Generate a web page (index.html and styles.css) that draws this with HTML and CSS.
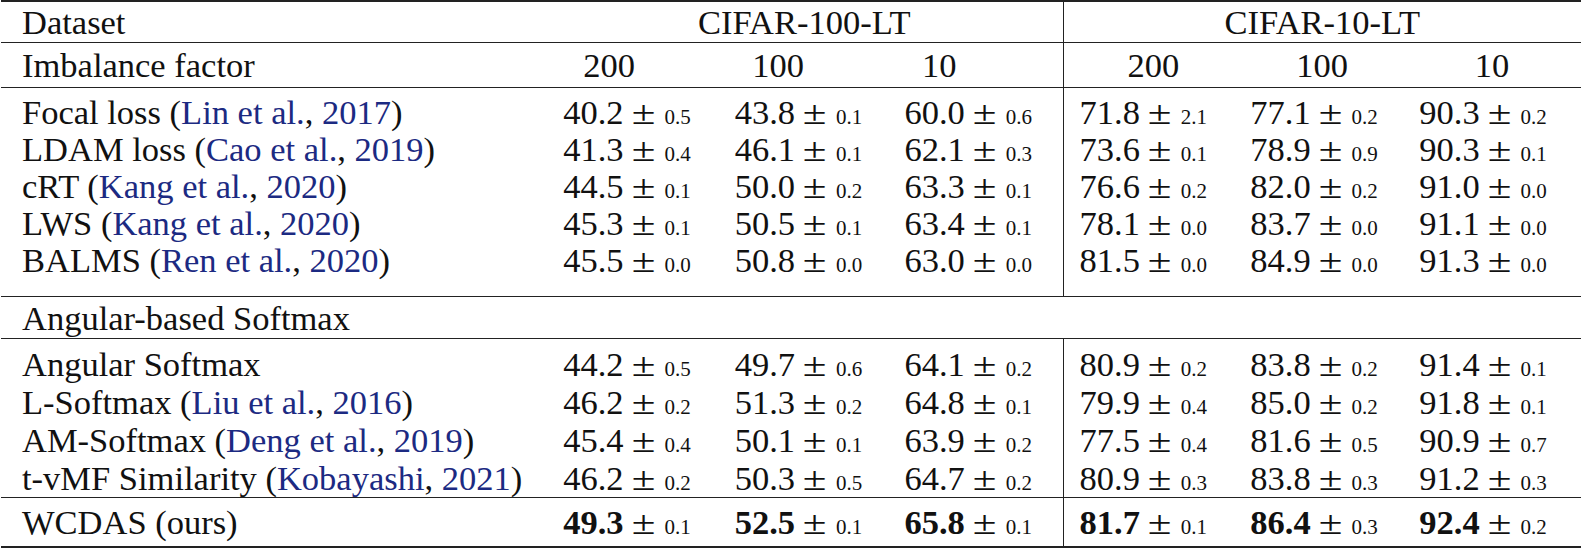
FILE: index.html
```html
<!DOCTYPE html>
<html lang="en">
<head>
  <meta charset="UTF-8" />
  <title>Long-tailed classification results</title>
  <link rel="stylesheet" href="styles.css">
</head>
<body>

<table class="results">
  <colgroup>
    <col class="c-label">
    <col class="c-a"><col class="c-b"><col class="c-c">
    <col class="c-a"><col class="c-b"><col class="c-d">
  </colgroup>
  <thead>
    <tr class="head-top">
      <th class="label">Dataset</th>
      <th colspan="3" class="split">CIFAR-100-LT</th>
      <th colspan="3">CIFAR-10-LT</th>
    </tr>
    <tr class="head-sub">
      <th class="label">Imbalance factor</th>
      <th class="h1">200</th><th class="h2">100</th><th class="h3 split">10</th>
      <th class="h4">200</th><th class="h5">100</th><th class="h6">10</th>
    </tr>
  </thead>

  <tbody class="group-a">
    <tr>
      <td class="label">Focal loss (<span class="cite">Lin et al.</span>, <span class="cite">2017</span>)</td>
      <td class="v1">40.2<span class="pm">±</span><small>0.5</small></td><td class="v2">43.8<span class="pm">±</span><small>0.1</small></td><td class="v3 split">60.0<span class="pm">±</span><small>0.6</small></td>
      <td class="v4">71.8<span class="pm">±</span><small>2.1</small></td><td class="v5">77.1<span class="pm">±</span><small>0.2</small></td><td class="v6">90.3<span class="pm">±</span><small>0.2</small></td>
    </tr>
    <tr>
      <td class="label">LDAM loss (<span class="cite">Cao et al.</span>, <span class="cite">2019</span>)</td>
      <td class="v1">41.3<span class="pm">±</span><small>0.4</small></td><td class="v2">46.1<span class="pm">±</span><small>0.1</small></td><td class="v3 split">62.1<span class="pm">±</span><small>0.3</small></td>
      <td class="v4">73.6<span class="pm">±</span><small>0.1</small></td><td class="v5">78.9<span class="pm">±</span><small>0.9</small></td><td class="v6">90.3<span class="pm">±</span><small>0.1</small></td>
    </tr>
    <tr>
      <td class="label">cRT (<span class="cite">Kang et al.</span>, <span class="cite">2020</span>)</td>
      <td class="v1">44.5<span class="pm">±</span><small>0.1</small></td><td class="v2">50.0<span class="pm">±</span><small>0.2</small></td><td class="v3 split">63.3<span class="pm">±</span><small>0.1</small></td>
      <td class="v4">76.6<span class="pm">±</span><small>0.2</small></td><td class="v5">82.0<span class="pm">±</span><small>0.2</small></td><td class="v6">91.0<span class="pm">±</span><small>0.0</small></td>
    </tr>
    <tr>
      <td class="label">LWS (<span class="cite">Kang et al.</span>, <span class="cite">2020</span>)</td>
      <td class="v1">45.3<span class="pm">±</span><small>0.1</small></td><td class="v2">50.5<span class="pm">±</span><small>0.1</small></td><td class="v3 split">63.4<span class="pm">±</span><small>0.1</small></td>
      <td class="v4">78.1<span class="pm">±</span><small>0.0</small></td><td class="v5">83.7<span class="pm">±</span><small>0.0</small></td><td class="v6">91.1<span class="pm">±</span><small>0.0</small></td>
    </tr>
    <tr>
      <td class="label">BALMS (<span class="cite">Ren et al.</span>, <span class="cite">2020</span>)</td>
      <td class="v1">45.5<span class="pm">±</span><small>0.0</small></td><td class="v2">50.8<span class="pm">±</span><small>0.0</small></td><td class="v3 split">63.0<span class="pm">±</span><small>0.0</small></td>
      <td class="v4">81.5<span class="pm">±</span><small>0.0</small></td><td class="v5">84.9<span class="pm">±</span><small>0.0</small></td><td class="v6">91.3<span class="pm">±</span><small>0.0</small></td>
    </tr>
  </tbody>

  <tbody class="section">
    <tr><td colspan="7" class="label">Angular-based Softmax</td></tr>
  </tbody>

  <tbody class="group-b">
    <tr>
      <td class="label">Angular Softmax</td>
      <td class="v1">44.2<span class="pm">±</span><small>0.5</small></td><td class="v2">49.7<span class="pm">±</span><small>0.6</small></td><td class="v3 split">64.1<span class="pm">±</span><small>0.2</small></td>
      <td class="v4">80.9<span class="pm">±</span><small>0.2</small></td><td class="v5">83.8<span class="pm">±</span><small>0.2</small></td><td class="v6">91.4<span class="pm">±</span><small>0.1</small></td>
    </tr>
    <tr>
      <td class="label">L-Softmax (<span class="cite">Liu et al.</span>, <span class="cite">2016</span>)</td>
      <td class="v1">46.2<span class="pm">±</span><small>0.2</small></td><td class="v2">51.3<span class="pm">±</span><small>0.2</small></td><td class="v3 split">64.8<span class="pm">±</span><small>0.1</small></td>
      <td class="v4">79.9<span class="pm">±</span><small>0.4</small></td><td class="v5">85.0<span class="pm">±</span><small>0.2</small></td><td class="v6">91.8<span class="pm">±</span><small>0.1</small></td>
    </tr>
    <tr>
      <td class="label">AM-Softmax (<span class="cite">Deng et al.</span>, <span class="cite">2019</span>)</td>
      <td class="v1">45.4<span class="pm">±</span><small>0.4</small></td><td class="v2">50.1<span class="pm">±</span><small>0.1</small></td><td class="v3 split">63.9<span class="pm">±</span><small>0.2</small></td>
      <td class="v4">77.5<span class="pm">±</span><small>0.4</small></td><td class="v5">81.6<span class="pm">±</span><small>0.5</small></td><td class="v6">90.9<span class="pm">±</span><small>0.7</small></td>
    </tr>
    <tr>
      <td class="label">t-vMF Similarity (<span class="cite">Kobayashi</span>, <span class="cite">2021</span>)</td>
      <td class="v1">46.2<span class="pm">±</span><small>0.2</small></td><td class="v2">50.3<span class="pm">±</span><small>0.5</small></td><td class="v3 split">64.7<span class="pm">±</span><small>0.2</small></td>
      <td class="v4">80.9<span class="pm">±</span><small>0.3</small></td><td class="v5">83.8<span class="pm">±</span><small>0.3</small></td><td class="v6">91.2<span class="pm">±</span><small>0.3</small></td>
    </tr>
  </tbody>

  <tbody class="ours">
    <tr>
      <td class="label">WCDAS (ours)</td>
      <td class="v1"><b>49.3</b><span class="pm">±</span><small>0.1</small></td><td class="v2"><b>52.5</b><span class="pm">±</span><small>0.1</small></td><td class="v3 split"><b>65.8</b><span class="pm">±</span><small>0.1</small></td>
      <td class="v4"><b>81.7</b><span class="pm">±</span><small>0.1</small></td><td class="v5"><b>86.4</b><span class="pm">±</span><small>0.3</small></td><td class="v6"><b>92.4</b><span class="pm">±</span><small>0.2</small></td>
    </tr>
  </tbody>
</table>

</body>
</html>
```

FILE: styles.css
```css
body {
  margin: 0;
  padding: 0 1px;
  background: #fff;
  color: #111;
  font-family: "Liberation Serif", "Times New Roman", Times, serif;
  font-size: 34.5px;
}

.results {
  width: 1580px;
  border-collapse: collapse;
  table-layout: fixed;
  border-top: 2px solid #222;
  border-bottom: 2px solid #222;
}

.c-label { width: 545px; }
.c-a { width: 170px; }
.c-b { width: 170px; }
.c-c { width: 177px; }
.c-d { width: 178px; }

.results th,
.results td {
  padding: 0;
  text-align: center;
  font-weight: normal;
  white-space: nowrap;
  line-height: 34px;
  vertical-align: middle;
}

.results .label {
  text-align: left;
  padding-left: 21px;
}

.split {
  border-right: 1px solid #222;
}

/* header numbers sit a little off the value centres, as in the paper */
.results .h1 { padding-right: 44px; }
.results .h2 { padding-right: 46px; }
.results .h3 { padding-right: 70px; }
.results .h4 { padding-left: 10px; }
.results .h5 { padding-left: 8px; }

.results .v1 { padding-right: 8px; }
.results .v2 { padding-right: 5px; }
.results .v3 { padding-right: 12px; }
.results .v4 { padding-right: 10px; }
.results .v5 { padding-right: 8px; }
.results .v6 { padding-right: 18px; }

.head-top th {
  height: 40px;
  border-bottom: 1px solid #222;
}

.head-sub th {
  height: 44px;
}

thead {
  border-bottom: 1px solid #222;
}

.group-a td { height: 37px; }
.results .group-a tr:first-child td { padding-top: 5px; }
.results .group-a tr:last-child td { padding-bottom: 18px; }

.section {
  border-top: 1px solid #222;
  border-bottom: 1px solid #222;
}

.section td { height: 41px; }

.group-b td { height: 38px; }
.results .group-b tr:first-child td { padding-top: 6px; }

.ours {
  border-top: 1px solid #222;
}

.ours td { height: 48px; }

.cite {
  color: #1c2a82;
}

/* math-style plus/minus: wider than the text glyph */
.pm {
  display: inline-block;
  margin: 0 10px;
  transform: scaleX(1.25);
}

small {
  margin-left: 2px;
  font-size: 21px;
  line-height: 1;
}

b {
  font-weight: bold;
}
```
